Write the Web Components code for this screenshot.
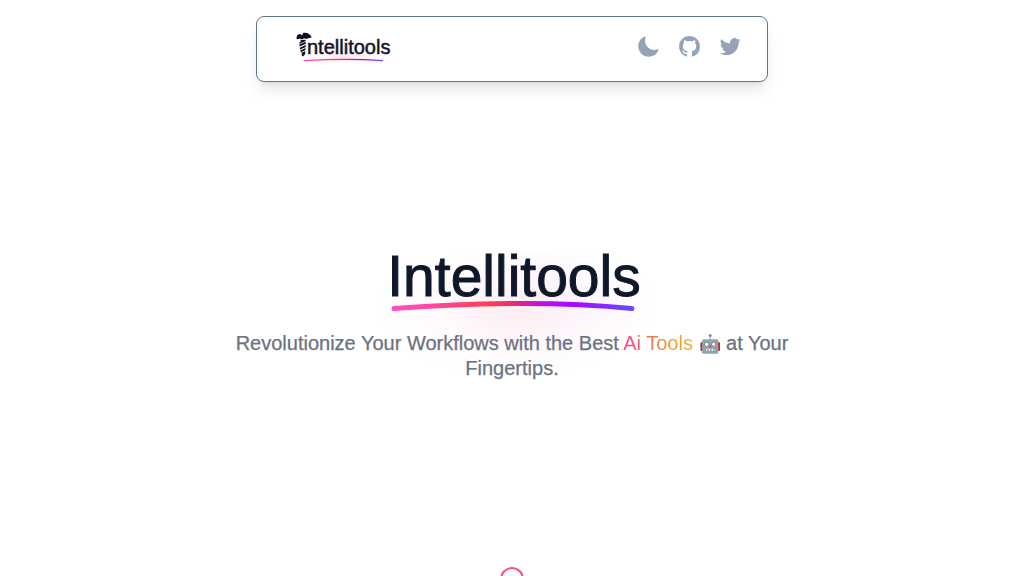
<!DOCTYPE html>
<html lang="en">
<head>
<meta charset="utf-8">
<meta name="viewport" content="width=device-width, initial-scale=1">
<title>Intellitools</title>
<style>
html{scrollbar-width:none}
body{margin:0;background:#fff;font-family:"Liberation Sans",Arial,sans-serif;color:#0f172a}
</style>
</head>
<body>
<intelli-app></intelli-app>
<script>
const define=(name,html)=>customElements.define(name,class extends HTMLElement{
  constructor(){super();this.attachShadow({mode:'open'}).innerHTML=html;}
});

define('intelli-swoosh',`
<style>:host{display:block}svg{display:block;width:100%;height:100%;overflow:visible}</style>
<svg viewBox="0 0 250 12" preserveAspectRatio="none" aria-hidden="true">
<defs><linearGradient id="g" gradientUnits="userSpaceOnUse" x1="0" x2="250" y1="0" y2="0"><stop offset="0" stop-color="#ff4ecb"/><stop offset=".18" stop-color="#ff479f"/><stop offset=".4" stop-color="#fb3f50"/><stop offset=".5" stop-color="#e5306f"/><stop offset=".62" stop-color="#b812e8"/><stop offset=".76" stop-color="#a30cff"/><stop offset="1" stop-color="#6550ff"/></linearGradient></defs>
<path d="M7 6.6C47 3.6 90 1.6 132 1.5S210 3 245 6.6" fill="none" stroke="url(#g)" stroke-width="5" stroke-linecap="round"/></svg>`);

define('intelli-logo',`
<style>
:host{display:block;width:96px}
a{display:block;color:#0f172a;text-decoration:none;background:radial-gradient(ellipse 45px 14px at 50% 80%,#ffe8ee,#fff0)}
.word{display:flex;font-size:20px;line-height:24px;-webkit-text-stroke:.5px #0f172a}
.screw{width:16px;height:25px;flex:none;margin-right:-5px}
.text{padding-top:3px}
intelli-swoosh{width:82px;height:3px;margin-left:6px}
</style>
<a href="#" aria-label="Intellitools home"><span class="word"><svg class="screw" viewBox="0 0 16 25" aria-hidden="true" fill="#0b1020"><path d="M.5 6.8C.4 3.7 2 1.8 4.3 2c.6 1 1.3 1.2 2.1.7L7.1 1c3-.9 6.5.3 8.5 3.9-.6 1-1.8 1.2-3 1-1.2 1.2-3 1.1-4.5.4-1.3 1-3.2 1.4-4.7.3-.8.6-1.8.8-2.9.2Z"/><path d="M4 8l5.4-.3.4 1.4-6.2 2.7-.2-1.6 2-.9zM3.4 12.6l6.2-2.8.2 1.9-6.2 2.8zM3.7 15.7l6-2.7v1.9l-5.6 2.7zM4.3 18.5l5.3-2.4-.2 1.9-4.6 2.2zM4.9 21l4.4-2-.3 3.2-1.9 2.2-2-1.6 1.6-.8z"/></svg><span class="text">ntellitools</span></span><intelli-swoosh></intelli-swoosh></a>`);

define('icon-button',`
<style>
:host{display:block}
button{display:block;width:24px;height:24px;padding:0;border:0;background:none;color:#94a3b8;cursor:pointer}
::slotted(svg){display:block;width:24px;height:24px;fill:currentColor}
</style><button><slot></slot></button>`);

define('icon-link',`
<style>
:host{display:block}a{display:block;color:#94a3b8}
::slotted(svg){display:block;width:24px;height:24px;fill:currentColor}
</style><a href="#"><slot></slot></a>`);

define('intelli-nav',`
<style>
:host{display:block;width:50%;margin:0 auto}
nav{display:flex;align-items:center;justify-content:space-between;box-sizing:border-box;min-height:66px;padding:8px 25px 8px 39px;border:1px solid #64748b;border-radius:8px;background:#fff;box-shadow:0 10px 15px -3px #0000001a,0 4px 6px -4px #0000001a}
intelli-logo{margin-bottom:4px}
.actions{display:flex;gap:17px;margin-bottom:4px}
</style>
<nav aria-label="Main"><intelli-logo></intelli-logo><div class="actions">
<icon-button><svg viewBox="0 0 24 24" role="img" aria-label="Toggle theme"><path fill-rule="evenodd" d="M9.528 1.718a.75.75 0 0 1 .162.819A8.97 8.97 0 0 0 9 6a9 9 0 0 0 9 9 8.97 8.97 0 0 0 3.463-.69.75.75 0 0 1 .981.98 10.503 10.503 0 0 1-9.694 6.46c-5.799 0-10.5-4.7-10.5-10.5 0-4.368 2.667-8.112 6.46-9.694a.75.75 0 0 1 .818.162Z"/></svg></icon-button>
<icon-link><svg viewBox="0 1 23 23" role="img" aria-label="GitHub"><path d="M12 2C6.475 2 2 6.475 2 12c0 4.425 2.863 8.163 6.838 9.488.5.087.687-.213.687-.476 0-.237-.013-1.024-.013-1.862-2.512.463-3.162-.612-3.362-1.175-.113-.288-.6-1.175-1.025-1.413-.35-.187-.85-.65-.013-.662.788-.013 1.35.725 1.538 1.025.9 1.513 2.337 1.088 2.912.825.088-.65.35-1.088.638-1.338-2.225-.25-4.55-1.112-4.55-4.937 0-1.088.387-1.988 1.025-2.688-.1-.25-.45-1.275.1-2.65 0 0 .837-.262 2.75 1.026A9.28 9.28 0 0 1 12 6.838c.85 0 1.7.112 2.5.337 1.912-1.3 2.75-1.025 2.75-1.025.55 1.375.2 2.4.1 2.65.637.7 1.025 1.587 1.025 2.687 0 3.838-2.337 4.688-4.562 4.938.362.312.675.912.675 1.85 0 1.337-.013 2.412-.013 2.75 0 .262.188.574.688.474A10.02 10.02 0 0 0 22 12c0-5.525-4.475-10-10-10Z"/></svg></icon-link>
<icon-link><svg viewBox="0 1 23 23" role="img" aria-label="Twitter"><path d="M8.08 20.25c7.547 0 11.675-6.253 11.675-11.675 0-.178 0-.355-.012-.53A8.35 8.35 0 0 0 21.79 5.92a8.2 8.2 0 0 1-2.357.646 4.12 4.12 0 0 0 1.804-2.27 8.22 8.22 0 0 1-2.605.996A4.107 4.107 0 0 0 11.64 9.035a11.65 11.65 0 0 1-8.458-4.287 4.11 4.11 0 0 0 1.27 5.477 4.1 4.1 0 0 1-1.862-.513v.052a4.105 4.105 0 0 0 3.292 4.022 4.1 4.1 0 0 1-1.853.07 4.11 4.11 0 0 0 3.834 2.85 8.23 8.23 0 0 1-6.075 1.7 11.6 11.6 0 0 0 6.292 1.844"/></svg></icon-link>
</div></nav>`);

define('intelli-hero',`
<style>
:host{display:flex;flex-direction:column;align-items:center;padding:170px 24px 64px}
.glow{padding:0 80px;display:flex;flex-direction:column;align-items:center;background:radial-gradient(ellipse 135px 65px at 50% 46%,#ffe4ea88,#fff5f866 60%,#fff0),radial-gradient(ellipse 100px 60px at 56% 40%,#f2e6ff66,#fff0)}
.brand{padding-left:4px}
h1{margin:0;font-size:57px;line-height:48px;font-weight:400;-webkit-text-stroke:1px #0f172a}
intelli-swoosh{width:250px;height:12px;margin-top:2px}
p{max-width:576px;margin:17px 0 0;text-align:center;font-size:20px;line-height:25px;color:#6b7280;-webkit-text-stroke:.25px #6b7280}
.accent{color:transparent;-webkit-text-stroke:0;background:linear-gradient(90deg,#ff4794,#ff477e 14%,#ec7b48 42%,#eda12b 75%,#eab32d);background-clip:text;-webkit-background-clip:text}
.robot{font-size:18px;line-height:20px;-webkit-text-stroke:0}
.scroll{box-sizing:border-box;width:24px;height:40px;margin-top:186px;border:2px solid #f4518c;border-radius:12px}
</style>
<div class="glow"><div class="brand"><h1>Intellitools</h1><intelli-swoosh></intelli-swoosh></div>
<p><span>Revolutionize Your Workflows with the Best </span><span class="accent">Ai Tools</span> <span class="robot">🤖</span><span> at Your </span><span>Fingertips.</span></p></div>
<div class="scroll" aria-hidden="true"></div>`);

define('intelli-app',`
<style>:host{display:block;padding-top:16px}main{display:block}</style>
<header><intelli-nav></intelli-nav></header><main><intelli-hero></intelli-hero></main>`);
</script>
</body>
</html>
